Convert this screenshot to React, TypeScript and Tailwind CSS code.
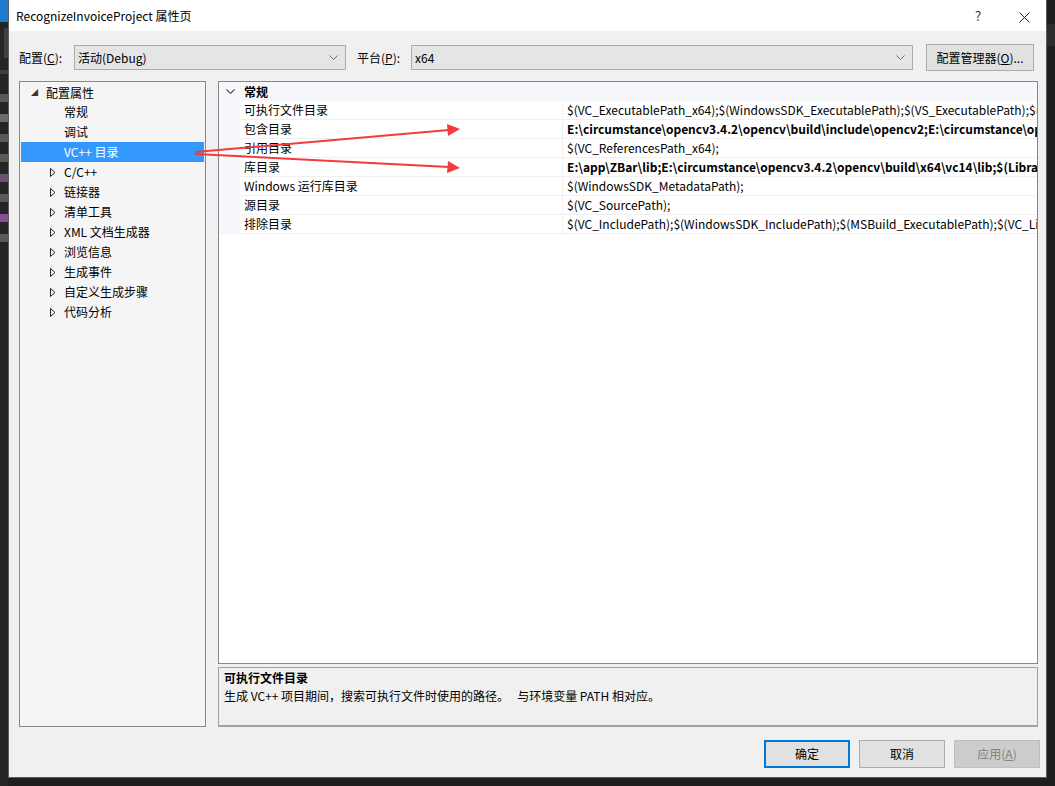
import React from 'react';

const font = { fontFamily: '"Noto Sans CJK SC", "Noto Sans", sans-serif' };

const treeChildren: { label: string; expandable: boolean; selected?: boolean }[] = [
  { label: '常规', expandable: false },
  { label: '调试', expandable: false },
  { label: 'VC++ 目录', expandable: false, selected: true },
  { label: 'C/C++', expandable: true },
  { label: '链接器', expandable: true },
  { label: '清单工具', expandable: true },
  { label: 'XML 文档生成器', expandable: true },
  { label: '浏览信息', expandable: true },
  { label: '生成事件', expandable: true },
  { label: '自定义生成步骤', expandable: true },
  { label: '代码分析', expandable: true },
];

const rows: { name: string; value: string; bold?: boolean }[] = [
  { name: '可执行文件目录', value: '$(VC_ExecutablePath_x64);$(WindowsSDK_ExecutablePath);$(VS_ExecutablePath);$(MSBuild_ExecutablePath);$(FxCopDir);$(PATH);' },
  { name: '包含目录', value: 'E:\\circumstance\\opencv3.4.2\\opencv\\build\\include\\opencv2;E:\\circumstance\\opencv3.4.2\\opencv\\build\\include;', bold: true },
  { name: '引用目录', value: '$(VC_ReferencesPath_x64);' },
  { name: '库目录', value: 'E:\\app\\ZBar\\lib;E:\\circumstance\\opencv3.4.2\\opencv\\build\\x64\\vc14\\lib;$(LibraryPath)', bold: true },
  { name: 'Windows 运行库目录', value: '$(WindowsSDK_MetadataPath);' },
  { name: '源目录', value: '$(VC_SourcePath);' },
  { name: '排除目录', value: '$(VC_IncludePath);$(WindowsSDK_IncludePath);$(MSBuild_ExecutablePath);$(VC_LibraryPath_x64);' },
];

const Chevron = () => (
  <svg width="9" height="6" viewBox="0 0 9 6" className="shrink-0">
    <path d="M0.5 0.5 L4.5 4.5 L8.5 0.5" fill="none" stroke="#6d6d6d" strokeWidth="1" />
  </svg>
);

const Dropdown = ({ value, width }: { value: string; width: string }) => (
  <div className={`${width} h-[25px] bg-[#e5e5e5] border border-[#acacac] flex items-center pl-[3px] pr-[7px] text-[12px] text-black`}>
    <span className="flex-1">{value}</span>
    <Chevron />
  </div>
);

const Arrows = () => (
  <svg className="absolute left-0 top-0 pointer-events-none" width="1055" height="786">
    <g stroke="#f23c3c" strokeWidth="2" fill="#f23c3c">
      <line x1="195" y1="152" x2="449" y2="130" />
      <polygon points="460,129 447,124 448,136" stroke="none" />
      <line x1="195" y1="154" x2="449" y2="167" />
      <polygon points="460,168 448,161 447,173" stroke="none" />
    </g>
  </svg>
);

const LeftStrip = () => (
  <div className="w-[8px] h-full bg-[#252526] flex flex-col overflow-hidden">
    <div className="h-[22px] bg-[#1c7bd0]" />
    <div className="h-[30px] mt-[6px] w-[4px] ml-[4px] bg-[#3f3f46]" />
    <div className="h-[4px] mt-[12px] bg-[#3e3e42]" />
    <div className="mt-[20px] flex flex-col gap-[12px] overflow-hidden">
      <span className="h-[8px] bg-[#5a5a5a]" />
      <span className="h-[8px] bg-[#6a6a6a]" />
      <span className="h-[8px] bg-[#5a5a5a]" />
      <span className="h-[8px] bg-[#5a5a5a]" />
      <span className="h-[8px] bg-[#6c4f79]" />
      <span className="h-[8px] bg-[#5a5a5a]" />
      <span className="h-[8px] bg-[#8a4d9a]" />
      <span className="h-[8px] bg-[#5a5a5a]" />
    </div>
  </div>
);

export default function App() {
  return (
    <div className="relative w-[1055px] h-[786px] bg-[#1f1f1f] flex overflow-hidden" style={font}>
      <LeftStrip />

      <div className="w-[1039px] h-[778px] shrink-0 flex flex-col bg-[#f0f0f0] border border-[#5e5e5e] border-t-0">
        {/* title bar */}
        <div className="h-[31px] bg-white flex items-center pl-[7px] text-[12px] text-black">
          <span className="flex-1">RecognizeInvoiceProject 属性页</span>
          <span className="w-[46px] text-center text-[13px] text-[#333] ml-[6px]">?</span>
          <span className="w-[46px] text-center mr-[-1px]">
            <svg width="11" height="11" viewBox="0 0 11 11" className="inline">
              <path d="M0.5 0.5 L10.5 10.5 M10.5 0.5 L0.5 10.5" stroke="#222" strokeWidth="1" />
            </svg>
          </span>
        </div>

        {/* config row */}
        <div className="flex items-center h-[27px] mt-[13px] pl-[10px] text-[12px] text-black">
          <span className="w-[55px]">配置(<u>C</u>):</span>
          <Dropdown value="活动(Debug)" width="w-[272px]" />
          <span className="ml-[11px] w-[54px]">平台(<u>P</u>):</span>
          <Dropdown value="x64" width="w-[502px]" />
          <div className="ml-[13px] w-[108px] h-[27px] bg-[#e1e1e1] border border-[#adadad] flex items-center justify-center">
            配置管理器(<u>O</u>)...
          </div>
        </div>

        {/* main area */}
        <div className="flex mt-[10px] pl-[10px] h-[646px]">
          {/* tree */}
          <div className="w-[187px] shrink-0 h-full bg-[#f5f5f5] border border-[#828790] pt-[1px] pl-[1px] pr-[1px] text-[12px] text-black">
            <div className="h-[19px] flex items-center">
              <span className="w-[13px] ml-[10px] text-[7px] text-[#333] leading-none">◢</span>
              <span className="ml-[2px]">配置属性</span>
            </div>
            {treeChildren.map((item) => (
              <div
                key={item.label}
                className={`h-[20px] flex items-center ${item.selected ? 'bg-[#3399ff] text-white' : ''}`}
              >
                <span className="w-[12px] ml-[29px] flex items-center">
                  {item.expandable && (
                    <svg width="6" height="9" viewBox="0 0 6 9">
                      <path d="M0.5 0.5 L5 4.5 L0.5 8.5 Z" fill="none" stroke="#222" strokeWidth="1" />
                    </svg>
                  )}
                </span>
                <span className="ml-[2px]">{item.label}</span>
              </div>
            ))}
          </div>

          {/* right side */}
          <div className="ml-[12px] w-[820px] shrink-0 flex flex-col">
            <div className="h-[584px] bg-white border border-[#828790] text-[12px] text-black overflow-hidden">
              <div className="h-[19px] flex items-center bg-[#f5f7fb]">
                <span className="w-[21px] shrink-0 flex justify-center pl-[2px]">
                  <svg width="9" height="6" viewBox="0 0 9 6">
                    <path d="M0.5 0.5 L4.5 4.5 L8.5 0.5" fill="none" stroke="#555" strokeWidth="1.2" />
                  </svg>
                </span>
                <span className="ml-[4px] font-bold">常规</span>
              </div>
              <div className="flex">
                <div className="w-[21px] shrink-0 bg-[#f5f7fb]" />
                <div className="flex-1 min-w-0">
                  {rows.map((r) => (
                    <div key={r.name} className="h-[19px] flex border-b border-[#f0f0f0] whitespace-nowrap">
                      <div className="w-[322px] shrink-0 flex items-center pl-[4px]">{r.name}</div>
                      <div className={`flex-1 min-w-0 flex items-center pl-[4px] overflow-hidden border-l border-[#f0f0f0] ${r.bold ? 'font-bold' : ''}`}>
                        {r.value}
                      </div>
                    </div>
                  ))}
                </div>
              </div>
            </div>

            <div className="mt-[3px] h-[60px] bg-[#f0f0f0] border border-[#a0a0a0] border-b-2 pl-[5px] pt-[1px] text-[12px] text-black leading-[18px]">
              <div className="font-bold">可执行文件目录</div>
              <div className="whitespace-pre">生成 VC++ 项目期间，搜索可执行文件时使用的路径。   与环境变量 PATH 相对应。</div>
            </div>
          </div>
        </div>

        {/* buttons */}
        <div className="flex justify-end gap-[9px] mt-[13px] pr-[6px] text-[12px]">
          <div className="w-[86px] h-[28px] bg-[#e1e1e1] border-2 border-[#0078d7] flex items-center justify-center text-black">确定</div>
          <div className="w-[86px] h-[28px] bg-[#e1e1e1] border border-[#adadad] flex items-center justify-center text-black">取消</div>
          <div className="w-[86px] h-[28px] bg-[#cccccc] border border-[#bfbfbf] flex items-center justify-center text-[#838383]">
            应用(<u>A</u>)
          </div>
        </div>
      </div>

      <div className="flex-1 h-full bg-[#1e1e1e] flex flex-col">
        <div className="h-[24px]" />
        <div className="h-[22px] bg-[#2d2d30]" />
      </div>

      <Arrows />
    </div>
  );
}
